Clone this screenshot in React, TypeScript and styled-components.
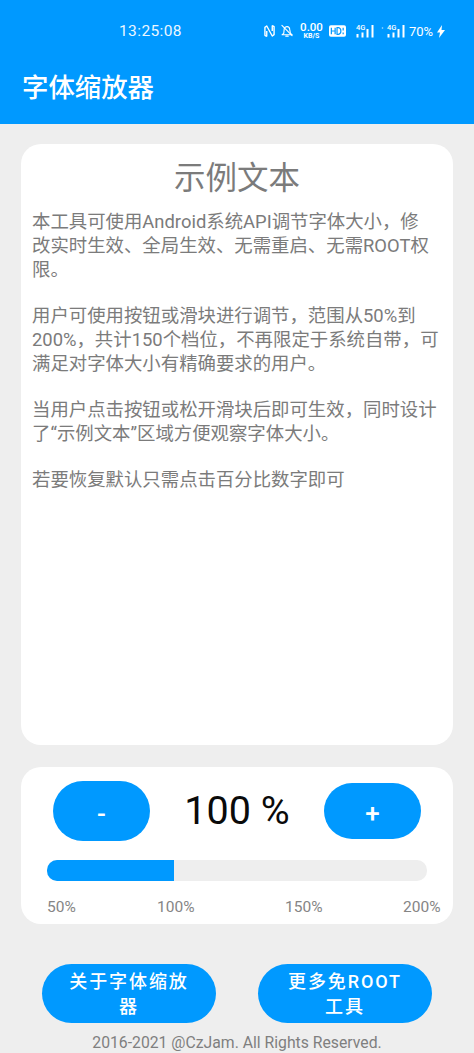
import React from 'react';
import styled, { createGlobalStyle } from 'styled-components';

const blue = '#0099ff';
const pageGray = '#eeeeee';
const textGray = '#7b7b7b';

const GlobalStyle = createGlobalStyle`
  html, body {
    margin: 0;
    padding: 0;
    background: ${pageGray};
    font-family: Roboto, "Noto Sans CJK SC", sans-serif;
  }
`;

const Page = styled.div`
  width: 474px;
  height: 1053px;
  display: flex;
  flex-direction: column;
  overflow: hidden;
`;

const Header = styled.header`
  height: 124px;
  flex: none;
  background: ${blue};
  color: #fff;
  display: flex;
  flex-direction: column;
`;

const StatusBar = styled.div`
  height: 62px;
  display: flex;
  align-items: center;
  padding-left: 119px;
`;

const Clock = styled.div`
  font-size: 15.5px;
  letter-spacing: 0.4px;
  width: 145px;
  flex: none;
  opacity: 0.92;
`;

const StatusIcons = styled.div`
  display: flex;
  align-items: center;
`;

const StatusSvg = styled.svg<{ $left?: number }>`
  display: block;
  flex: none;
  margin-left: ${p => p.$left ?? 0}px;
`;

const SpeedBox = styled.div`
  display: flex;
  flex-direction: column;
  align-items: center;
  font-weight: 500;
  width: 23px;
  margin: 0 6px 0 7px;
`;

const SpeedValue = styled.span`
  font-size: 11.5px;
  line-height: 10px;
`;

const SpeedUnit = styled.span`
  font-size: 7px;
  line-height: 8px;
  font-weight: 700;
`;

const Battery = styled.span`
  font-size: 13px;
  width: 24px;
  margin: 0 4px;
  white-space: nowrap;
`;

const Title = styled.h1`
  margin: 0;
  padding-left: 22px;
  font-size: 26.4px;
  line-height: 52px;
  font-weight: 500;
`;

const Content = styled.main`
  flex: none;
  display: flex;
  flex-direction: column;
  padding: 20px 21px 0;
`;

const Card = styled.section`
  background: #fff;
  border-radius: 20px;
`;

const SampleCard = styled(Card)`
  height: 601px;
  padding: 14px 11px 0;
  box-sizing: border-box;
  color: ${textGray};
`;

const SampleTitle = styled.h2`
  margin: 0 0 10px;
  text-align: center;
  font-size: 31.5px;
  line-height: 42px;
  font-weight: 400;
`;

const SampleBody = styled.div`
  font-size: 18.4px;
  line-height: 24px;
`;

const Paragraph = styled.p`
  margin: 0 0 22px;
`;

const ControlCard = styled(Card)`
  height: 157px;
  margin-top: 22px;
  padding: 14px 26px 0;
  box-sizing: border-box;
`;

const ControlRow = styled.div`
  display: flex;
  align-items: center;
  justify-content: space-between;
  padding: 0 6px;
  height: 60px;
`;

const StepButton = styled.button<{ $tall?: boolean }>`
  width: 97px;
  height: ${p => (p.$tall ? 60 : 56)}px;
  border: 0;
  border-radius: 30px;
  background: ${blue};
  color: #fff;
  font-family: inherit;
  font-size: 26px;
  font-weight: 500;
  padding: ${p => (p.$tall ? 6 : 3)}px 0 0;
`;

const Percent = styled.div`
  font-size: 39.5px;
  color: #0a0a0a;
  line-height: 62px;
`;

const Track = styled.div`
  height: 21px;
  margin-top: 19px;
  width: 380px;
  border-radius: 10px;
  background: ${pageGray};
  overflow: hidden;
`;

const TrackFill = styled.div`
  height: 100%;
  background: ${blue};
`;

const Ticks = styled.div`
  display: grid;
  grid-template-columns: 110px 128px 118px auto;
  width: 396px;
  margin-top: 15px;
  color: #858585;
  font-size: 15.5px;
  line-height: 22px;
`;

const ActionRow = styled.div`
  display: flex;
  justify-content: space-between;
  padding: 0 42px;
  margin-top: 40px;
`;

const ActionButton = styled.button`
  width: 174px;
  height: 59px;
  border: 0;
  border-radius: 30px;
  background: ${blue};
  color: #fff;
  font-family: inherit;
  font-size: 18px;
  line-height: 24.5px;
  font-weight: 500;
  letter-spacing: 1.9px;
  padding: 2px 22px 0;
`;

const Footer = styled.footer`
  margin-top: 9px;
  text-align: center;
  color: #7f7f7f;
  font-size: 15.75px;
  line-height: 22px;
`;

const NfcIcon = () => (
  <StatusSvg width="11" height="14" viewBox="0 0 12 14" fill="none" stroke="#fff" strokeWidth="1.5" strokeLinejoin="round">
    <path d="M3 13 1 11.7V3l2-1.500 6 11 2-1.500V2.300L9 1" />
    <path d="M3 13V7M9 1v6" />
  </StatusSvg>
);

const BellOffIcon = () => (
  <StatusSvg $left={6} width="12" height="14" viewBox="0 0 13 14" fill="none" stroke="#fff" strokeWidth="1.2" strokeLinecap="round" strokeLinejoin="round">
    <path d="M3.500 4.500A3 3 0 0 1 9.400 5l.8 4.500L12 11H1.200L3 9.500l.5-5Z" />
    <path d="M5.200 12.600h2.600M1 1l11 11" />
  </StatusSvg>
);

const HdIcon = () => (
  <StatusSvg width="17" height="12" viewBox="0 0 18 12">
    <rect width="18" height="12" rx="2" fill="#fff" />
    <path d="M2.500 2.500v7M6.500 2.500v7M2.500 6h4" stroke={blue} strokeWidth="1.300" fill="none" />
    <path d="M8.500 2.500v7h1.500a3 3 0 0 0 2.500-3.500 3 3 0 0 0-2.500-3.500H8.500Z" stroke={blue} strokeWidth="1.300" fill="none" />
    <path d="M15 2.500v3M15 7.500v2" stroke={blue} strokeWidth="1.300" />
  </StatusSvg>
);

const SignalIcon = ({ dot }: { dot?: boolean }) => (
  <StatusSvg
    $left={dot ? 7 : 10}
    width={dot ? 24 : 18}
    height="14"
    viewBox={dot ? '-6 0 24 14' : '0 0 18 14'}
  >
    {dot && <circle cx="-4.500" cy="4" r="0.800" fill="#fff" opacity="0.7" />}
    <text x="0" y="6" fontSize="7.500" fontWeight="500" fill="#fff" fontFamily="Roboto, sans-serif">4G</text>
    <rect x="0.500" y="10" width="2" height="3.500" fill="#fff" />
    <rect x="5.500" y="8.500" width="2" height="5" fill="#fff" />
    <rect x="10.500" y="5" width="2" height="8.500" fill="#fff" />
    <rect x="15.500" y="1" width="2" height="12.500" fill="#fff" />
  </StatusSvg>
);

const BoltIcon = () => (
  <StatusSvg width="8" height="13" viewBox="0 0 8 13">
    <path d="M5 0 0 7.500h3L2 13l6-8H4.500L5 0Z" fill="#fff" />
  </StatusSvg>
);

const App = () => (
  <Page>
    <GlobalStyle />
    <Header>
      <StatusBar>
        <Clock>13:25:08</Clock>
        <StatusIcons>
          <NfcIcon />
          <BellOffIcon />
          <SpeedBox>
            <SpeedValue>0.00</SpeedValue>
            <SpeedUnit>KB/S</SpeedUnit>
          </SpeedBox>
          <HdIcon />
          <SignalIcon />
          <SignalIcon dot />
          <Battery>70%</Battery>
          <BoltIcon />
        </StatusIcons>
      </StatusBar>
      <Title>字体缩放器</Title>
    </Header>
    <Content>
      <SampleCard>
        <SampleTitle>示例文本</SampleTitle>
        <SampleBody>
          <Paragraph>
            本工具可使用Android系统API调节字体大小，修
            <br />
            改实时生效、全局生效、无需重启、无需ROOT权限。
          </Paragraph>
          <Paragraph>用户可使用按钮或滑块进行调节，范围从50%到200%，共计150个档位，不再限定于系统自带，可满足对字体大小有精确要求的用户。</Paragraph>
          <Paragraph>当用户点击按钮或松开滑块后即可生效，同时设计了“示例文本”区域方便观察字体大小。</Paragraph>
          <Paragraph>若要恢复默认只需点击百分比数字即可</Paragraph>
        </SampleBody>
      </SampleCard>
      <ControlCard>
        <ControlRow>
          <StepButton $tall>-</StepButton>
          <Percent>100 %</Percent>
          <StepButton>+</StepButton>
        </ControlRow>
        <Track>
          <TrackFill style={{ width: `${(100 / 300) * 100}%` }} />
        </Track>
        <Ticks>
          <span>50%</span>
          <span>100%</span>
          <span>150%</span>
          <span>200%</span>
        </Ticks>
      </ControlCard>
    </Content>
    <ActionRow>
      <ActionButton>关于字体缩放器</ActionButton>
      <ActionButton>更多免ROOT工具</ActionButton>
    </ActionRow>
    <Footer>2016-2021 @CzJam. All Rights Reserved.</Footer>
  </Page>
);

export default App;
